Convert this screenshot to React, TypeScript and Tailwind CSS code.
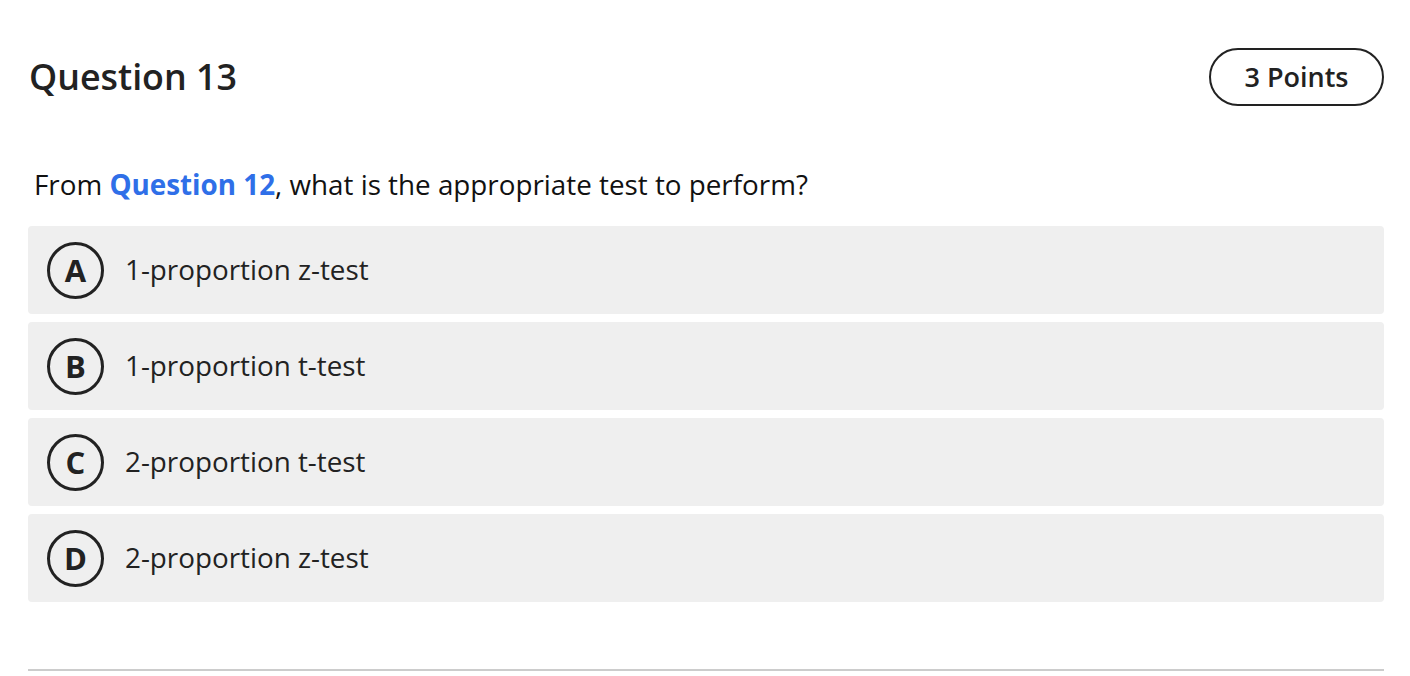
import React from "react";

const options = [
  { letter: "A", text: "1-proportion z-test" },
  { letter: "B", text: "1-proportion t-test" },
  { letter: "C", text: "2-proportion t-test" },
  { letter: "D", text: "2-proportion z-test" },
];

export default function App() {
  return (
    <div className="w-[1410px] h-[676px] bg-white pl-[28px] pr-[26px] font-['Open_Sans',sans-serif] text-[#222]">
      <div className="flex items-center justify-between pt-[48px] h-[106px]">
        <h1 className="text-[35.8px] font-semibold leading-none pl-[1px]">Question 13</h1>
        <div className="h-[58px] w-[175px] rounded-full border-2 border-[#222] flex items-center justify-center text-[27px] font-semibold">
          3 Points
        </div>
      </div>
      <p className="mt-[60px] pl-[6px] text-[27.8px] leading-[36px] text-[#111]">
        From <span className="font-bold text-[#2f6fe8]">Question 12</span>, what is the appropriate test to perform?
      </p>
      <div className="mt-[24px] flex flex-col gap-[8px]">
        {options.map((o) => (
          <div key={o.letter} className="h-[88px] rounded-[4px] bg-[#efefef] flex items-center pl-[19px]">
            <div className="w-[57px] h-[57px] rounded-full border-[3px] border-[#222] flex items-center justify-center text-[31px] font-bold leading-none">
              {o.letter}
            </div>
            <span className="ml-[21px] text-[27.8px]">{o.text}</span>
          </div>
        ))}
      </div>
      <div className="mt-[67px] h-[2px] bg-[#cccccc]" />
    </div>
  );
}
